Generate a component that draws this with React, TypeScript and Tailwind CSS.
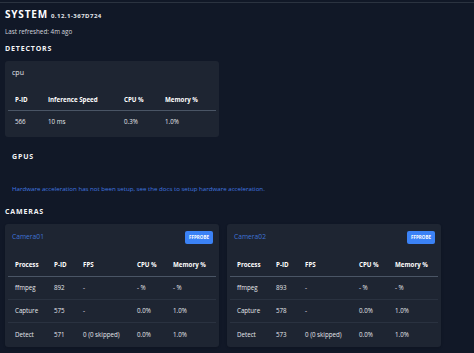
import React from "react";

const detectorCols = "grid grid-cols-[33px_76px_41px_59px]";
const cameraCols = "grid grid-cols-[39px_29px_54px_36px_50px]";

type CameraRow = {
  process: string;
  pid: string;
  fps: string;
  cpu: string;
  mem: string;
};

const cameras: { name: string; rows: CameraRow[] }[] = [
  {
    name: "Camera01",
    rows: [
      { process: "ffmpeg", pid: "892", fps: "-", cpu: "- %", mem: "- %" },
      { process: "Capture", pid: "575", fps: "-", cpu: "0.0%", mem: "1.0%" },
      { process: "Detect", pid: "571", fps: "0 (0 skipped)", cpu: "0.0%", mem: "1.0%" },
    ],
  },
  {
    name: "Camera02",
    rows: [
      { process: "ffmpeg", pid: "893", fps: "-", cpu: "- %", mem: "- %" },
      { process: "Capture", pid: "578", fps: "-", cpu: "0.0%", mem: "1.0%" },
      { process: "Detect", pid: "573", fps: "0 (0 skipped)", cpu: "0.0%", mem: "1.0%" },
    ],
  },
];

function SectionTitle({ children }: { children: React.ReactNode }) {
  return (
    <h2 className="text-[7px] leading-[10px] font-bold tracking-[0.12em] text-gray-100">
      {children}
    </h2>
  );
}

function CameraCard({ name, rows }: { name: string; rows: CameraRow[] }) {
  return (
    <div className="w-[214px] rounded-[3px] bg-[#1e2532] px-[3px] pt-[7px] pb-[1px] shadow">
      <div className="flex h-[13px] items-center justify-between pl-[4px] pr-[3px]">
        <span className="text-[6.7px] text-[#3f73d6]">{name}</span>
        <button className="flex h-[13px] w-[28px] items-center justify-center rounded-[2px] bg-[#3b82f6] text-[4.5px] font-bold text-white">
          FFPROBE
        </button>
      </div>
      <div className="mt-[10px]">
        <div
          className={`${cameraCols} h-[23px] items-center border-b border-[#4a5565] text-[6.2px] font-bold text-white`}
        >
          <span className="pl-[7px]">Process</span>
          <span className="pl-[7px]">P-ID</span>
          <span className="pl-[7px]">FPS</span>
          <span className="pl-[7px]">CPU %</span>
          <span className="pl-[7px]">Memory %</span>
        </div>
        {rows.map((r, i) => (
          <div
            key={r.process}
            className={`${cameraCols} h-[23px] items-center text-[6.2px] text-gray-200 ${
              i < rows.length - 1 ? "border-b border-[#2a3240]" : ""
            }`}
          >
            <span className="pl-[7px]">{r.process}</span>
            <span className="pl-[7px]">{r.pid}</span>
            <span className="pl-[7px] whitespace-nowrap">{r.fps}</span>
            <span className="pl-[7px]">{r.cpu}</span>
            <span className="pl-[7px]">{r.mem}</span>
          </div>
        ))}
      </div>
    </div>
  );
}

export default function App() {
  return (
    <div
      className="min-h-[353px] w-[474px] overflow-hidden bg-[#111827] text-gray-200"
      style={{ fontFamily: '"Open Sans", "Noto Sans", sans-serif' }}
    >
      <div className="h-[3px] border-b border-[#2b3340]" />
      <div className="px-[5px]">
        <div className="mt-[5px] flex items-baseline gap-[3px]">
          <h1 className="text-[10px] leading-[13px] font-bold tracking-[0.08em] text-white">
            SYSTEM
          </h1>
          <span className="text-[6px] font-bold tracking-[0.08em] text-gray-200">
            0.12.1-367D724
          </span>
        </div>
        <p className="mt-[6px] text-[6.3px] leading-[10px] text-gray-300">
          Last refreshed: 4m ago
        </p>
        <div className="mt-[7px]">
          <SectionTitle>DETECTORS</SectionTitle>
        </div>

        <div className="mt-[7px] w-[214px] rounded-[3px] bg-[#1e2532] px-[3px] pt-[6px] pb-[4px]">
          <p className="pl-[4px] text-[7px] leading-[12px] text-gray-200">cpu</p>
          <div className="mt-[10px]">
            <div
              className={`${detectorCols} h-[22px] items-center border-b border-[#4a5565] text-[6.2px] font-bold text-white`}
            >
              <span className="pl-[7px]">P-ID</span>
              <span className="pl-[7px]">Inference Speed</span>
              <span className="pl-[7px]">CPU %</span>
              <span className="pl-[7px]">Memory %</span>
            </div>
            <div className={`${detectorCols} h-[22px] items-center text-[6.2px] text-gray-200`}>
              <span className="pl-[7px]">566</span>
              <span className="pl-[7px]">10 ms</span>
              <span className="pl-[7px]">0.3%</span>
              <span className="pl-[7px]">1.0%</span>
            </div>
          </div>
        </div>

        <div className="mt-[15px] pl-[7px]">
          <SectionTitle>GPUS</SectionTitle>
          <p className="mt-[22px] text-[6.15px] leading-[10px] text-[#4178e0]">
            Hardware acceleration has not been setup, see the docs to setup hardware acceleration.
          </p>
        </div>

        <div className="mt-[13px]">
          <SectionTitle>CAMERAS</SectionTitle>
        </div>

        <div className="mt-[7px] flex gap-[8px]">
          {cameras.map((c) => (
            <CameraCard key={c.name} name={c.name} rows={c.rows} />
          ))}
        </div>
      </div>
    </div>
  );
}
